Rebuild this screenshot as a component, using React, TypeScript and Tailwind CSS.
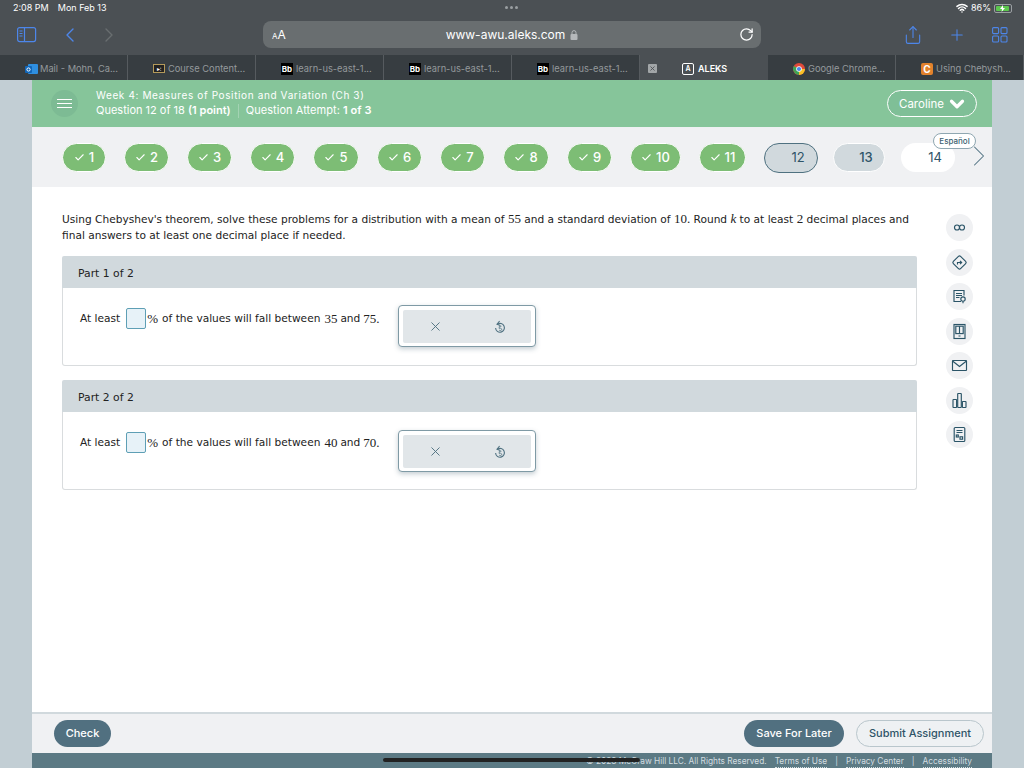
import { Check, ChevronDown, ChevronLeft, ChevronRight, Plus, RotateCw, Share, Wifi, X } from 'lucide-react';

const ui = "font-['Inter',sans-serif]";
const verdana = "font-['DejaVu_Sans',sans-serif]";
const serif = "font-['Liberation_Serif',serif]";

const tabs = [
  { label: 'Mail - Mohn, Ca...', icon: 'mail', pad: 'pl-[25px]' },
  { label: 'Course Content...', icon: 'course', pad: 'pl-[25px]' },
  { label: 'learn-us-east-1...', icon: 'bb', pad: 'pl-[25px]' },
  { label: 'learn-us-east-1...', icon: 'bb', pad: 'pl-[25px]' },
  { label: 'learn-us-east-1...', icon: 'bb', pad: 'pl-[25px]' },
  { label: 'ALEKS', icon: 'aleks', active: true, pad: 'pl-[42px]' },
  { label: 'Google Chrome...', icon: 'chrome', pad: 'pl-[25px]' },
  { label: 'Using Chebysh...', icon: 'c', pad: 'pl-[25px]' },
];

const pills = [
  { n: '1', w: 'w-[44px]' },
  { n: '2', w: 'w-[45px]' },
  { n: '3', w: 'w-[45px]' },
  { n: '4', w: 'w-[45px]' },
  { n: '5', w: 'w-[46px]' },
  { n: '6', w: 'w-[45px]' },
  { n: '7', w: 'w-[45px]' },
  { n: '8', w: 'w-[46px]' },
  { n: '9', w: 'w-[45px]' },
  { n: '10', w: 'w-[51px]' },
  { n: '11', w: 'w-[47px]' },
];

function Favicon({ kind }: { kind: string }) {
  if (kind === 'mail')
    return (
      <svg width="13" height="12" viewBox="0 0 13 12" className="mr-[2px]">
        <rect x="3" y="1" width="10" height="10" rx="1" fill="#2f8fe0" />
        <rect x="0" y="3" width="7" height="7" rx="1" fill="#1166b8" />
        <circle cx="3.5" cy="6.5" r="1.6" fill="none" stroke="#fff" strokeWidth="1" />
      </svg>
    );
  if (kind === 'course')
    return (
      <div className="mr-[3px] flex h-[9px] w-[12px] items-center justify-center border border-[#b49a5a] bg-[#222] text-[6px] leading-none text-white">
        ▸:
      </div>
    );
  if (kind === 'bb')
    return (
      <div className="mr-[3px] flex h-[12px] w-[12px] items-center justify-center bg-black text-[8px] font-bold leading-none text-white">
        Bb
      </div>
    );
  if (kind === 'aleks')
    return (
      <div className="mr-[4px] flex h-[12px] w-[12px] items-center justify-center rounded-[2px] border border-white text-[7px] leading-none text-white">
        A
      </div>
    );
  if (kind === 'chrome')
    return (
      <svg width="12" height="12" viewBox="0 0 12 12" className="mr-[3px]">
        <circle cx="6" cy="6" r="6" fill="#e04a3a" />
        <path d="M6 6 1 9a6 6 0 0 0 5 3z" fill="#3aa757" />
        <path d="M6 6 1 9a6 6 0 0 1-.2-6z" fill="#3aa757" />
        <path d="M6 6h6a6 6 0 0 1-6 6z" fill="#f6c026" />
        <circle cx="6" cy="6" r="2.8" fill="#fff" />
        <circle cx="6" cy="6" r="2.1" fill="#4a86e8" />
      </svg>
    );
  return (
    <div className="mr-[3px] flex h-[12px] w-[12px] items-center justify-center rounded-[2px] bg-[#e2822c] text-[10px] font-bold leading-none text-white">
      C
    </div>
  );
}

function Tab({ tab }: { tab: (typeof tabs)[number] }) {
  return (
    <div
      className={`relative flex h-full w-[128px] items-center pt-[2px] ${tab.pad} ${
        tab.active ? 'bg-[#4b5054] text-[9px] font-semibold text-white' : 'border-r border-[#565b5f] bg-[#373d41] text-[9.3px] text-[#94999c]'
      }`}
    >
      {tab.active && (
        <div className="absolute left-[8px] top-[9px] flex h-[9px] w-[9px] items-center justify-center rounded-[1px] bg-[#a2a6a8]">
          <X size={7} strokeWidth={3} className="text-[#4b5054]" />
        </div>
      )}
      <Favicon kind={tab.icon} />
      <span className="whitespace-nowrap">{tab.label}</span>
    </div>
  );
}

function SideIcon({ children }: { children: React.ReactNode }) {
  return (
    <div className="flex h-[27px] w-[27px] items-center justify-center rounded-full bg-[#f0f1f3]">
      <svg width="17" height="17" viewBox="0 0 17 17" fill="none" stroke="#2a5467" strokeWidth="1.15">
        {children}
      </svg>
    </div>
  );
}

function UndoIcon() {
  return (
    <svg width="12" height="14" viewBox="0 0 12 14" fill="none" stroke="#4f7180" strokeWidth="1.1">
      <path d="M3.5 4.2A4.4 4.4 0 1 1 1.6 8" />
      <path d="M5.6 1 3 4.2l3.4 1.4" />
      <path d="M7.4 6.3H5.4L5.1 8.4c1.6-.6 2.8.1 2.6 1.2-.2 1-1.6 1.3-2.6.5" strokeWidth="0.8" />
    </svg>
  );
}

function Part({ title, a, b, boxTop }: { title: string; a: string; b: string; boxTop: string }) {
  return (
    <section>
      <div className="flex h-[32px] items-center rounded-t-[2px] bg-[#d1d9dd] pl-[16px] pt-[4px] text-[10.8px] text-[#222]">{title}</div>
      <div className="flex h-[78px] items-start rounded-b-[3px] border border-t-0 border-[#d9dcde] pl-[17px]">
        <div className="mt-[19px] flex h-[24px] items-center whitespace-nowrap text-[10.6px] text-[#222]">
          <span>At least</span>
          <span className="-mt-[2px] ml-[6px] mr-[1px] h-[21px] w-[20px] rounded-[2px] border border-[#5e9fb5] bg-[#e7f2f8]" />
          <span className={`${serif} text-[13px]`}>%</span>
          <span className="ml-[4px]">of the values will fall between</span>
          <span className={`${serif} ml-[4px] text-[13px]`}>{a}</span>
          <span className="mx-[3px]">and</span>
          <span className={`${serif} text-[13px]`}>{b}.</span>
        </div>
        <div className={`ml-[18px] ${boxTop} h-[42px] w-[138px] rounded-[4px] border border-[#7f9aa5] bg-white p-[4px] shadow-[0_2px_5px_rgba(60,90,105,0.3)]`}>
          <div className="flex h-[33px] items-center rounded-[2px] bg-[#e1e6e9] pl-[25px]">
            <X size={15} strokeWidth={1.5} className="text-[#4f7180]" />
            <div className="ml-[51px]">
              <UndoIcon />
            </div>
          </div>
        </div>
      </div>
    </section>
  );
}

export default function App() {
  return (
    <div className={`${ui} relative flex h-[768px] w-[1024px] flex-col overflow-hidden bg-[#c2ced4]`}>
      {/* Safari chrome */}
      <div className="h-[55px] bg-[#4b5054]">
        <div className="relative flex h-[16px] items-center justify-between pl-[13px] pr-[12px] text-[9px] text-white">
          <div className="flex gap-[9px]">
            <span>2:08 PM</span>
            <span>Mon Feb 13</span>
          </div>
          <div className="absolute left-[505px] top-[6px] flex gap-[2px]">
            <span className="h-[3px] w-[3px] rounded-full bg-[#9a9fa2]" />
            <span className="h-[3px] w-[3px] rounded-full bg-[#9a9fa2]" />
            <span className="h-[3px] w-[3px] rounded-full bg-[#9a9fa2]" />
          </div>
          <div className="flex items-center gap-[3px]">
            <Wifi size={12} strokeWidth={3} />
            <span>86%</span>
            <div className="flex h-[9px] w-[18px] items-center rounded-[2px] border border-[#9a9fa2] p-[1px]">
              <div className="flex h-full w-[13px] items-center justify-center rounded-[1px] bg-[#5cc84e]">
                <svg width="7" height="7" viewBox="0 0 7 7" fill="#fff">
                  <path d="M4 0 1 4h2L2.6 7 6 3H4z" />
                </svg>
              </div>
            </div>
          </div>
        </div>
        <div className="flex h-[39px] items-start pt-[5px]">
          <div className="flex h-[27px] w-[263px] items-center pl-[17px]">
            <svg width="20" height="16" viewBox="0 0 20 16" fill="none" stroke="#4d86ea" strokeWidth="1.2">
              <rect x="0.6" y="0.6" width="18" height="14" rx="2" />
              <path d="M7.5 0.6v14M2.5 4h3M2.5 6.5h3M2.5 9h3" />
            </svg>
            <ChevronLeft size={24} strokeWidth={1.4} className="ml-[21px] text-[#4d86ea]" />
            <ChevronRight size={24} strokeWidth={1.4} className="ml-[15px] text-[#696e70]" />
          </div>
          <div className="relative flex h-[27px] w-[498px] items-center justify-center rounded-[8px] bg-[#696e70] text-white">
            <span className="absolute left-[9px] text-[12px] leading-none">
              <span className="text-[8px]">A</span>A
            </span>
            <span className="text-[12px]">www-awu.aleks.com</span>
            <svg width="8" height="10" viewBox="0 0 8 10" className="ml-[5px]" fill="#b5b8ba">
              <rect x="0.5" y="4" width="7" height="6" rx="1" />
              <path d="M2 4.5V2.6a2 2 0 0 1 4 0v1.9" fill="none" stroke="#b5b8ba" strokeWidth="1" />
            </svg>
            <RotateCw size={15} className="absolute right-[7px]" />
          </div>
          <div className="flex h-[27px] items-center text-[#4d86ea]">
            <Share size={20} strokeWidth={1.3} className="ml-[142px]" />
            <Plus size={18} strokeWidth={1.4} className="ml-[25px]" />
            <svg width="16" height="16" viewBox="0 0 16 16" fill="none" stroke="currentColor" strokeWidth="1.1" className="ml-[26px]">
              <rect x="0.6" y="0.6" width="6" height="6" rx="1" />
              <rect x="9" y="0.6" width="6" height="6" rx="1" />
              <rect x="0.6" y="9" width="6" height="6" rx="1" />
              <rect x="9" y="9" width="6" height="6" rx="1" />
            </svg>
          </div>
        </div>
      </div>
      <div className="flex h-[25px]">
        {tabs.map((t, i) => (
          <Tab key={i} tab={t} />
        ))}
      </div>

      {/* ALEKS page */}
      <div className="mx-[32px] flex w-[960px] flex-1 flex-col bg-white">
        <header className="flex h-[47px] shrink-0 items-center bg-[#86c59a] pl-[19px] pr-[15px] text-white">
          <div className="flex h-[27px] w-[27px] flex-col items-center justify-center gap-[3px] rounded-full bg-[#7dbb94]">
            <span className="h-px w-[15px] bg-white" />
            <span className="h-px w-[15px] bg-white" />
            <span className="h-px w-[15px] bg-white" />
          </div>
          <div className="ml-[18px] flex-1">
            <div className="-mt-[1px] mb-[1px] text-[10px] leading-[14px] tracking-[0.62px]">Week 4: Measures of Position and Variation (Ch 3)</div>
            <div className="flex items-center text-[11px] leading-[15px]">
              <span>
                Question 12 of 18 <span className="font-semibold">(1 point)</span>
              </span>
              <span className="mx-[7px] h-[14px] w-px bg-[#a3d3b3]" />
              <span className="tracking-[0.05px]">
                Question Attempt: <span className="font-semibold">1 of 3</span>
              </span>
            </div>
          </div>
          <button className="flex h-[27px] w-[90px] items-center justify-center gap-[2px] rounded-full border border-white bg-[#7fbf97] pl-[3px] text-[11.5px]">
            <span className="pt-[2px]">Caroline</span>
            <ChevronDown size={22} strokeWidth={3.5} />
          </button>
        </header>
        <div className="h-px shrink-0 bg-[#eef1f2]" />

        {/* question pills */}
        <nav className="relative flex h-[59px] shrink-0 items-center gap-[18px] bg-[#f0f1f3] pl-[30px]">
          {pills.map(p => (
            <div key={p.n} className={`flex h-[29px] ${p.w} shrink-0 items-center justify-center gap-[4px] rounded-full border border-white bg-[#7dbd75] text-[13px] font-medium text-white`}>
              <Check size={11} strokeWidth={2.4} />
              {p.n}
            </div>
          ))}
          <div className="flex h-[30px] w-[54px] shrink-0 items-center justify-center rounded-full border border-[#4f7180] bg-[#d1d9dd] pl-[14px] text-[13px] text-[#2f5468]">12</div>
          <div className="-ml-[3px] flex h-[29px] w-[52px] shrink-0 items-center justify-center rounded-full border border-white bg-[#d1d9dd] pl-[14px] text-[13px] font-medium text-[#2f5468]">13</div>
          <div className="-ml-[2px] flex h-[29px] w-[54px] shrink-0 items-center justify-center rounded-full bg-white pl-[14px] text-[13px] text-[#2f5468]">14</div>
          <ChevronRight size={36} strokeWidth={0.7} className="-ml-[12px] mb-[3px] shrink-0 text-[#4f7180]" />
          <div className="absolute left-[901px] top-[5px] flex h-[16px] w-[43px] items-center justify-center rounded-full border border-[#8fa7b1] bg-white text-[8px] font-medium text-[#3c5f70]">Español</div>
        </nav>

        {/* question body */}
        <main className={`${verdana} flex flex-1`}>
          <div className="w-[885px] pl-[30px] pt-[24px]">
            <p className="w-[855px] text-[10.6px] leading-[16px] text-[#222]">
              Using Chebyshev's theorem, solve these problems for a distribution with a mean of{' '}
              <span className={`${serif} text-[13px] leading-[16px]`}>55</span> and a standard deviation of{' '}
              <span className={`${serif} text-[13px] leading-[16px]`}>10.</span> Round <span className={`${serif} text-[13px] italic leading-[16px]`}>k</span> to at least{' '}
              <span className={`${serif} text-[13px] leading-[16px]`}>2</span> decimal places and
              <br />
              final answers to at least one decimal place if needed.
            </p>
            <div className="mt-[13px] flex w-[855px] flex-col gap-[14px]">
              <Part title="Part 1 of 2" a="35" b="75" boxTop="mt-[17px]" />
              <Part title="Part 2 of 2" a="40" b="70" boxTop="mt-[18px]" />
            </div>
          </div>
          <div className="flex flex-col gap-[7.5px] pl-[29px] pt-[27px]">
            <SideIcon>
              <circle cx="6" cy="8.5" r="2.5" />
              <circle cx="11" cy="8.5" r="2.5" />
            </SideIcon>
            <SideIcon>
              <rect x="3.4" y="3.4" width="10.2" height="10.2" rx="1.5" transform="rotate(45 8.5 8.5)" />
              <path d="M6.5 10.5V8.5h4M9 6.8l1.7 1.7L9 10.2" />
            </SideIcon>
            <SideIcon>
              <path d="M13 7.5V2.5H3v11h7" />
              <path d="M5 5.5h6M5 7.5h6M5 9.5h3.5" />
              <circle cx="12" cy="11" r="2.2" />
              <path d="M12 13.2v2" />
            </SideIcon>
            <SideIcon>
              <rect x="3" y="1.5" width="11" height="14" />
              <rect x="4.8" y="3.2" width="7.4" height="7.4" />
              <path d="M8.5 3.2v7.4M7.5 13h2" />
            </SideIcon>
            <SideIcon>
              <rect x="1.5" y="3.5" width="14" height="10" rx="0.5" />
              <path d="m1.5 4 7 5.5 7-5.5" />
            </SideIcon>
            <SideIcon>
              <rect x="2" y="7.5" width="3.6" height="8" rx="0.5" />
              <rect x="6.7" y="1.5" width="3.6" height="14" rx="0.5" />
              <rect x="11.4" y="9.5" width="3.6" height="6" rx="0.5" />
            </SideIcon>
            <SideIcon>
              <rect x="3.2" y="1.5" width="10.6" height="14" rx="1" />
              <path d="M5.5 4.5h6M5.5 6.5h6" />
              <rect x="5.3" y="9" width="2" height="2" />
              <rect x="9" y="10.8" width="2.6" height="2.4" />
            </SideIcon>
          </div>
        </main>

        {/* footer */}
        <div className="flex h-[41px] shrink-0 items-center border-t-2 border-[#d1d9dd] bg-[#f0f1f3] pl-[22px] pr-[8px] text-[11px] font-medium">
          <button className="flex h-[27px] w-[57px] items-center justify-center rounded-full bg-[#517080] text-white">Check</button>
          <button className="ml-auto flex h-[27px] w-[100px] items-center justify-center rounded-full bg-[#517080] text-white">Save For Later</button>
          <button className="ml-[12px] flex h-[27px] w-[128px] items-center justify-center rounded-full border border-[#b9c6cc] bg-[#eef1f3] text-[#2f5468]">Submit Assignment</button>
        </div>
        <div className="flex h-[15px] shrink-0 items-center justify-end whitespace-nowrap bg-[#5c7a84] pr-[20px] pt-[2px] text-[8.3px] text-[#d3dde1]">
          <span>© 2023 McGraw Hill LLC. All Rights Reserved.</span>
          <span className="ml-[8px] border-b border-dotted border-[#d3dde1]">Terms of Use</span>
          <span className="mx-[8px]">|</span>
          <span className="border-b border-dotted border-[#d3dde1]">Privacy Center</span>
          <span className="mx-[8px]">|</span>
          <span className="border-b border-dotted border-[#d3dde1]">Accessibility</span>
        </div>
      </div>

      {/* home indicator */}
      <div className="absolute left-[383px] top-[758px] h-[4px] w-[257px] rounded-full bg-[#222]" />
    </div>
  );
}
